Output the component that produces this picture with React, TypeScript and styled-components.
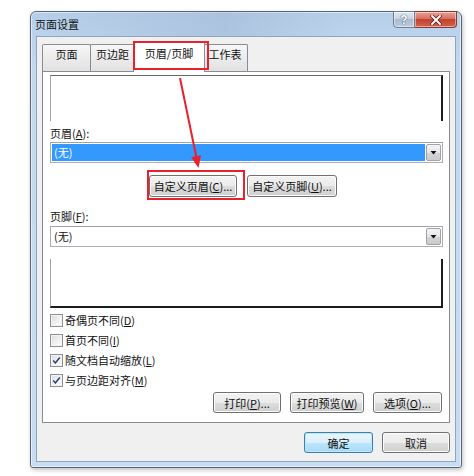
import React from "react";
import styled, { createGlobalStyle } from "styled-components";

const Global = createGlobalStyle`
  html, body { margin: 0; padding: 0; background: #ffffff; }
  body {
    font-family: "Noto Sans CJK SC", "Noto Sans", sans-serif;
    font-size: 11px;
    color: #111;
  }
  * { box-sizing: border-box; }
`;

const Page = styled.div`
  position: relative;
  width: 474px;
  height: 476px;
  padding: 11px 0 0 30px;
  overflow: hidden;
`;

const Window = styled.div`
  width: 432px;
  height: 457px;
  border: 1px solid #56657a;
  border-radius: 6px 6px 3px 3px;
  background: linear-gradient(180deg, #b6cfe9 0%, #c2d8ef 12%, #c8ddf2 100%);
  box-shadow: inset 0 0 0 1px rgba(255, 255, 255, 0.55), 1px 2px 4px rgba(0, 0, 0, 0.25);
  display: flex;
  flex-direction: column;
`;

const TitleBar = styled.div`
  height: 24px;
  display: flex;
  align-items: flex-start;
  padding-left: 4px;
  background: linear-gradient(90deg, rgba(255,255,255,0) 0%, rgba(140,160,190,0.28) 45%, rgba(255,255,255,0) 72%);
`;

const Title = styled.div`
  line-height: 24px;
  font-size: 11px;
  color: #111;
`;

const Controls = styled.div`
  margin-left: auto;
  margin-right: 4px;
  margin-top: -1px;
  display: flex;
`;

const CaptionButton = styled.div<{ $kind: "help" | "close" }>`
  height: 17px;
  width: ${(p) => (p.$kind === "help" ? "22px" : "42px")};
  display: flex;
  align-items: center;
  justify-content: center;
  border: 1px solid ${(p) => (p.$kind === "help" ? "#6f7f93" : "#8b3a36")};
  border-left-width: ${(p) => (p.$kind === "help" ? "1px" : "0")};
  border-radius: ${(p) => (p.$kind === "help" ? "0 0 0 4px" : "0 0 4px 0")};
  background: ${(p) =>
    p.$kind === "help"
      ? "linear-gradient(180deg, #dfe8f2 0%, #c5d3e3 45%, #a9bbd1 50%, #bccde0 100%)"
      : "linear-gradient(180deg, #e8a193 0%, #d7705f 45%, #c2422e 50%, #d2624c 100%)"};
  box-shadow: inset 0 0 0 1px rgba(255, 255, 255, 0.45);
`;

const HelpGlyph = styled.span`
  font-family: "Liberation Sans", sans-serif;
  font-weight: bold;
  font-size: 12px;
  line-height: 14px;
  color: #ffffff;
  text-shadow: 0 0 1px #3b4a5e, 0 0 1px #3b4a5e;
`;

const Client = styled.div`
  flex: 1;
  margin: 0 5px 5px 5px;
  border: 1px solid #8ea4bd;
  background: #f0f0f0;
  padding: 4px 5px 0 5px;
  display: flex;
  flex-direction: column;
`;

const TabStrip = styled.div`
  height: 30px;
  display: flex;
  align-items: flex-end;
`;

const Tab = styled.div<{ $active?: boolean; $w: number }>`
  position: relative;
  z-index: ${(p) => (p.$active ? 2 : 1)};
  width: ${(p) => p.$w}px;
  height: ${(p) => (p.$active ? "31px" : "27px")};
  margin-bottom: ${(p) => (p.$active ? "-1px" : "0")};
  margin-left: ${(p) => (p.$active ? "-2px" : "-1px")};
  margin-right: ${(p) => (p.$active ? "-2px" : "0")};
  border: 1px solid #898c95;
  border-bottom: none;
  border-radius: 2px 2px 0 0;
  background: ${(p) =>
    p.$active ? "#ffffff" : "linear-gradient(180deg, #f6f6f6 0%, #ececec 50%, #e1e1e1 100%)"};
  display: flex;
  justify-content: center;
  padding-top: ${(p) => (p.$active ? "3px" : "1px")};
  line-height: 16px;
  &:first-child { margin-left: 0; }
`;

const Panel = styled.div`
  height: 352px;
  border: 1px solid #898c95;
  background: #ffffff;
  padding: 3px 6px 0 7px;
  display: flex;
  flex-direction: column;
`;

const Preview = styled.div<{ $place: "top" | "bottom" }>`
  height: ${(p) => (p.$place === "top" ? "46px" : "49px")};
  border-left: 1px solid #a3a3a3;
  border-right: 2px solid #1c1c1c;
  border-top: ${(p) => (p.$place === "top" ? "1px solid #6a6a6a" : "none")};
  border-bottom: ${(p) => (p.$place === "bottom" ? "2px solid #1c1c1c" : "none")};
  margin-top: ${(p) => (p.$place === "top" ? "0" : "12px")};
  background: #ffffff;
`;

const FieldLabel = styled.div<{ $mt: number }>`
  margin-top: ${(p) => p.$mt}px;
  line-height: 16px;
  height: 16px;
`;

const Combo = styled.div<{ $mt: number }>`
  margin-top: ${(p) => p.$mt}px;
  height: 21px;
  border: 1px solid #abadb3;
  border-top-color: #a0a3aa;
  padding: 1px;
  display: flex;
  background: #ffffff;
`;

const ComboValue = styled.div<{ $selected?: boolean }>`
  flex: 1;
  background: ${(p) => (p.$selected ? "#3399ff" : "transparent")};
  color: ${(p) => (p.$selected ? "#ffffff" : "#111")};
  padding-left: 2px;
  line-height: 17px;
  margin-right: 1px;
`;

const DropButton = styled.div`
  width: 15px;
  border: 1px solid #9ea3ab;
  border-radius: 2px;
  background: linear-gradient(180deg, #f4f4f4 0%, #e6e6e6 50%, #d5d5d5 51%, #cbcbcb 100%);
  display: flex;
  align-items: center;
  justify-content: center;
`;

const CenterRow = styled.div`
  margin-top: 12px;
  display: flex;
  justify-content: center;
  gap: 10px;
  padding-right: 7px;
`;

const Button = styled.div<{ $w: number; $h?: number; $default?: boolean }>`
  width: ${(p) => p.$w}px;
  height: ${(p) => p.$h ?? 21}px;
  border: 1px solid ${(p) => (p.$default ? "#3c7fb1" : "#707070")};
  border-radius: 3px;
  background: ${(p) =>
    p.$default
      ? "linear-gradient(180deg, #eaf6fd 0%, #d9f0fc 50%, #bee6fd 51%, #a7d9f5 100%)"
      : "linear-gradient(180deg, #f2f2f2 0%, #ebebeb 50%, #dddddd 51%, #cfcfcf 100%)"};
  box-shadow: inset 0 0 0 1px ${(p) => (p.$default ? "#bde8fb" : "#fcfcfc")};
  display: flex;
  align-items: center;
  justify-content: center;
  line-height: 16px;
  color: #111;
  white-space: nowrap;
`;

const Checks = styled.div`
  margin-top: 2px;
  display: flex;
  flex-direction: column;
`;

const CheckRow = styled.div`
  height: 20px;
  display: flex;
  align-items: center;
  gap: 2px;
`;

const Box = styled.div`
  width: 13px;
  height: 13px;
  border: 1px solid #8e8f8f;
  background: linear-gradient(135deg, #dcdcdc 0%, #f2f2f2 60%, #ffffff 100%);
  box-shadow: inset 0 0 0 1px #f4f4f4;
  display: flex;
  align-items: center;
  justify-content: center;
`;

const CheckLabel = styled.span`
  line-height: 16px;
`;

const RightRow = styled.div<{ $mt: number; $gap: number; $pr: number }>`
  margin-top: ${(p) => p.$mt}px;
  display: flex;
  justify-content: flex-end;
  gap: ${(p) => p.$gap}px;
  padding-right: ${(p) => p.$pr}px;
`;

const Overlay = styled.svg`
  position: absolute;
  left: 0;
  top: 0;
  z-index: 10;
  pointer-events: none;
`;

const Check = ({ on }: { on: boolean }) => (
  <Box>
    {on && (
      <svg width="9" height="9" viewBox="0 0 9 9">
        <path d="M1.2 4.6 L3.4 6.9 L7.8 1.6" fill="none" stroke="#2b3a6b" strokeWidth="1.5" />
      </svg>
    )}
  </Box>
);

const Arrow = () => (
  <svg width="7" height="4" viewBox="0 0 7 4">
    <polygon points="0.5,0 6.5,0 3.5,3.5" fill="#111" />
  </svg>
);

export default function App() {
  return (
    <>
      <Global />
      <Page>
        <Window>
          <TitleBar>
            <Title>页面设置</Title>
            <Controls>
              <CaptionButton $kind="help">
                <HelpGlyph>?</HelpGlyph>
              </CaptionButton>
              <CaptionButton $kind="close">
                <svg width="12" height="10" viewBox="0 0 12 10">
                  <path d="M2 1 L10 9 M10 1 L2 9" stroke="#4a1a14" strokeWidth="3.4" strokeLinecap="square" />
                  <path d="M2 1 L10 9 M10 1 L2 9" stroke="#ffffff" strokeWidth="2" strokeLinecap="square" />
                </svg>
              </CaptionButton>
            </Controls>
          </TitleBar>
          <Client>
            <TabStrip>
              <Tab $w={49}>页面</Tab>
              <Tab $w={45}>页边距</Tab>
              <Tab $w={72} $active>
                页眉/页脚
              </Tab>
              <Tab $w={46}>工作表</Tab>
            </TabStrip>
            <Panel>
              <Preview $place="top" />
              <FieldLabel $mt={4}>
                页眉(<u>A</u>):
              </FieldLabel>
              <Combo $mt={1}>
                <ComboValue $selected>(无)</ComboValue>
                <DropButton>
                  <Arrow />
                </DropButton>
              </Combo>
              <CenterRow>
                <Button $w={88} $h={22}>
                  自定义页眉(<u>C</u>)...
                </Button>
                <Button $w={90} $h={22}>
                  自定义页脚(<u>U</u>)...
                </Button>
              </CenterRow>
              <FieldLabel $mt={11}>
                页脚(<u>F</u>):
              </FieldLabel>
              <Combo $mt={2}>
                <ComboValue>(无)</ComboValue>
                <DropButton>
                  <Arrow />
                </DropButton>
              </Combo>
              <Preview $place="bottom" />
              <Checks>
                <CheckRow>
                  <Check on={false} />
                  <CheckLabel>
                    奇偶页不同(<u>D</u>)
                  </CheckLabel>
                </CheckRow>
                <CheckRow>
                  <Check on={false} />
                  <CheckLabel>
                    首页不同(<u>I</u>)
                  </CheckLabel>
                </CheckRow>
                <CheckRow>
                  <Check on />
                  <CheckLabel>
                    随文档自动缩放(<u>L</u>)
                  </CheckLabel>
                </CheckRow>
                <CheckRow>
                  <Check on />
                  <CheckLabel>
                    与页边距对齐(<u>M</u>)
                  </CheckLabel>
                </CheckRow>
              </Checks>
              <RightRow $mt={2} $gap={9} $pr={1}>
                <Button $w={68}>
                  打印(<u>P</u>)...
                </Button>
                <Button $w={74}>
                  打印预览(<u>W</u>)
                </Button>
                <Button $w={69}>
                  选项(<u>O</u>)...
                </Button>
              </RightRow>
            </Panel>
            <RightRow $mt={9} $gap={9} $pr={0}>
              <Button $w={69} $default>
                确定
              </Button>
              <Button $w={68}>取消</Button>
            </RightRow>
          </Client>
        </Window>
        <Overlay width="474" height="476" viewBox="0 0 474 476">
          <rect x="134" y="42" width="74" height="27" fill="none" stroke="#e8212b" strokeWidth="2" />
          <rect x="148" y="171" width="96" height="28" fill="none" stroke="#e8212b" strokeWidth="2" />
          <line x1="180" y1="78" x2="196.3" y2="157" stroke="#e8212b" strokeWidth="2" />
          <polygon points="198.5,168 201,155.2 191.2,157.2" fill="#e8212b" />
        </Overlay>
      </Page>
    </>
  );
}
